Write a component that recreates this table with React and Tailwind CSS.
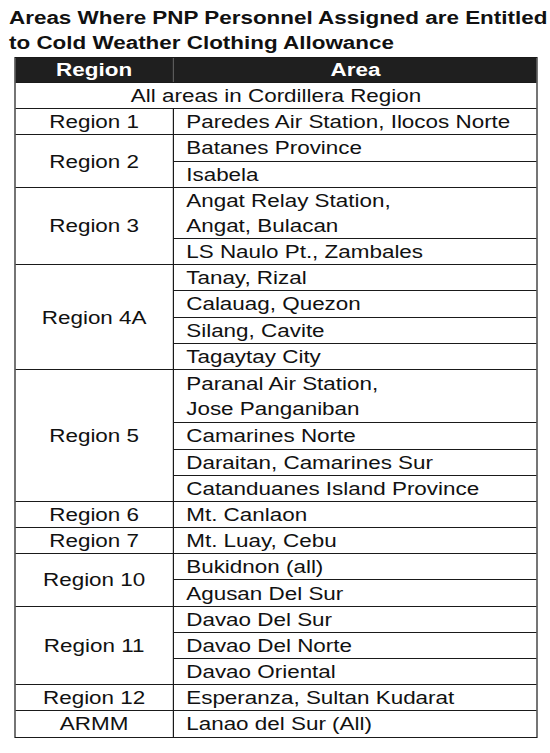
import React from "react";

const groups = [
  { region: "Region 1", areas: [[["Paredes Air Station, Ilocos Norte"]]] },
  { region: "Region 2", areas: [[["Batanes Province"]], [["Isabela"]]] },
  { region: "Region 3", areas: [[["Angat Relay Station,", "Angat, Bulacan"], 51], [["LS Naulo Pt., Zambales"]]] },
  {
    region: "Region 4A",
    areas: [[["Tanay, Rizal"], 26.35], [["Calauag, Quezon"], 26.35], [["Silang, Cavite"], 26.35], [["Tagaytay City"], 26.35]],
  },
  {
    region: "Region 5",
    areas: [
      [["Paranal Air Station,", "Jose Panganiban"], 53],
      [["Camarines Norte"]],
      [["Daraitan, Camarines Sur"]],
      [["Catanduanes Island Province"]],
    ],
  },
  { region: "Region 6", areas: [[["Mt. Canlaon"]]] },
  { region: "Region 7", areas: [[["Mt. Luay, Cebu"]]] },
  { region: "Region 10", areas: [[["Bukidnon (all)"]], [["Agusan Del Sur"]]] },
  { region: "Region 11", areas: [[["Davao Del Sur"]], [["Davao Del Norte"]], [["Davao Oriental"]]] },
  { region: "Region 12", areas: [[["Esperanza, Sultan Kudarat"]]] },
  { region: "ARMM", areas: [[["Lanao del Sur (All)"]]] },
];

const LINE = 26.2;

export default function App() {
  return (
    <div className="w-[550px] h-[753px] bg-white overflow-hidden">
      <div
        className="w-[458.3px] origin-top-left scale-x-[1.2] text-[#111] text-[18.7px]"
        style={{ fontFamily: '"Liberation Sans", Arial, sans-serif' }}
      >
        <h1 className="pl-[7.5px] pt-[4.5px] font-bold leading-[25px] text-[18.7px] whitespace-nowrap">
          Areas Where PNP Personnel Assigned are Entitled
          <br />
          to Cold Weather Clothing Allowance
        </h1>
        <div className="ml-[11.7px] mt-[2.5px] w-[436.7px] border border-[#1a1a1a]">
          <div className="flex h-[24px] bg-[#1f1f1f] text-white font-bold leading-[24px]">
            <div className="w-[132.5px] shrink-0 text-center border-r border-[#5a5a5a]">Region</div>
            <div className="flex-1 text-center">Area</div>
          </div>
          <div
            className="flex items-center justify-center border-t border-[#1a1a1a] leading-[25px]"
            style={{ height: LINE }}
          >
            All areas in Cordillera Region
          </div>
          {groups.map((g) => (
            <div key={g.region} className="flex">
              <div className="w-[132.5px] shrink-0 flex items-center justify-center border-t border-r border-[#1a1a1a] leading-[25px]">
                {g.region}
              </div>
              <div className="flex-1 flex flex-col">
                {g.areas.map(([lines, h], i) => (
                  <div
                    key={i}
                    className="flex flex-col justify-center pl-[10px] border-t border-[#1a1a1a] leading-[25px] whitespace-nowrap"
                    style={{ height: h || LINE * lines.length }}
                  >
                    {lines.map((l) => (
                      <span key={l}>{l}</span>
                    ))}
                  </div>
                ))}
              </div>
            </div>
          ))}
        </div>
      </div>
    </div>
  );
}
